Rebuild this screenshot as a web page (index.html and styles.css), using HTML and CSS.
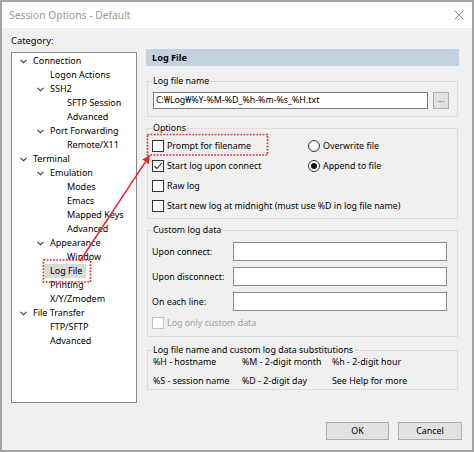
FILE: index.html
```html
<!DOCTYPE html>
<html>
<head>
<meta charset="utf-8">
<title>Session Options - Default</title>
<link rel="stylesheet" href="styles.css">
</head>
<body>
<div class="window">
  <div class="titlebar">
    <span class="title">Session Options - Default</span>
    <svg class="close" width="10" height="10" viewBox="0 0 10 10"><path d="M0.5 0.5 L9.5 9.5 M9.5 0.5 L0.5 9.5" stroke="#8a8a8a" stroke-width="1" fill="none"/></svg>
  </div>
  <div class="content">
    <div class="main">
      <div class="left">
        <div class="category">Category:</div>
        <div class="tree">
          <div class="row l0"><span class="chev"><svg width="7" height="5" viewBox="0 0 7 5"><path d="M0.5 0.8 L3.5 3.8 L6.5 0.8" fill="none" stroke="#333" stroke-width="1.1"/></svg></span>Connection</div>
          <div class="row l1"><span class="chev"></span>Logon Actions</div>
          <div class="row l1"><span class="chev"><svg width="7" height="5" viewBox="0 0 7 5"><path d="M0.5 0.8 L3.5 3.8 L6.5 0.8" fill="none" stroke="#333" stroke-width="1.1"/></svg></span>SSH2</div>
          <div class="row l2"><span class="chev"></span>SFTP Session</div>
          <div class="row l2"><span class="chev"></span>Advanced</div>
          <div class="row l1"><span class="chev"><svg width="7" height="5" viewBox="0 0 7 5"><path d="M0.5 0.8 L3.5 3.8 L6.5 0.8" fill="none" stroke="#333" stroke-width="1.1"/></svg></span>Port Forwarding</div>
          <div class="row l2"><span class="chev"></span>Remote/X11</div>
          <div class="row l0"><span class="chev"><svg width="7" height="5" viewBox="0 0 7 5"><path d="M0.5 0.8 L3.5 3.8 L6.5 0.8" fill="none" stroke="#333" stroke-width="1.1"/></svg></span>Terminal</div>
          <div class="row l1"><span class="chev"><svg width="7" height="5" viewBox="0 0 7 5"><path d="M0.5 0.8 L3.5 3.8 L6.5 0.8" fill="none" stroke="#333" stroke-width="1.1"/></svg></span>Emulation</div>
          <div class="row l2"><span class="chev"></span>Modes</div>
          <div class="row l2"><span class="chev"></span>Emacs</div>
          <div class="row l2"><span class="chev"></span>Mapped Keys</div>
          <div class="row l2"><span class="chev"></span>Advanced</div>
          <div class="row l1"><span class="chev"><svg width="7" height="5" viewBox="0 0 7 5"><path d="M0.5 0.8 L3.5 3.8 L6.5 0.8" fill="none" stroke="#333" stroke-width="1.1"/></svg></span>Appearance</div>
          <div class="row l2"><span class="chev"></span>Window</div>
          <div class="row l1"><span class="chev"></span><span class="selected">Log File</span></div>
          <div class="row l1"><span class="chev"></span>Printing</div>
          <div class="row l1"><span class="chev"></span>X/Y/Zmodem</div>
          <div class="row l0"><span class="chev"><svg width="7" height="5" viewBox="0 0 7 5"><path d="M0.5 0.8 L3.5 3.8 L6.5 0.8" fill="none" stroke="#333" stroke-width="1.1"/></svg></span>File Transfer</div>
          <div class="row l1"><span class="chev"></span>FTP/SFTP</div>
          <div class="row l1"><span class="chev"></span>Advanced</div>
        </div>
      </div>
      <div class="panel">
        <div class="header">Log File</div>

        <fieldset class="group g-name">
          <legend>Log file name</legend>
          <div class="fname">
            <div class="input wide">C:₩Log₩%Y-%M-%D_%h-%m-%s_%H.txt</div>
            <div class="dots">...</div>
          </div>
        </fieldset>

        <fieldset class="group g-opts">
          <legend>Options</legend>
          <div class="opts">
            <div class="opt"><span class="cb"></span>Prompt for filename</div>
            <div class="opt"><span class="rb"></span>Overwrite file</div>
            <div class="opt"><span class="cb"><svg width="10" height="10" viewBox="0 0 10 10"><path d="M1.5 5 L4 7.5 L8.8 2" fill="none" stroke="#222" stroke-width="1.1"/></svg></span>Start log upon connect</div>
            <div class="opt"><span class="rb on"><span class="dot"></span></span>Append to file</div>
            <div class="opt span"><span class="cb"></span>Raw log</div>
            <div class="opt span"><span class="cb"></span>Start new log at midnight (must use %D in log file name)</div>
          </div>
        </fieldset>

        <fieldset class="group g-custom">
          <legend>Custom log data</legend>
          <div class="custom">
            <div class="clabel">Upon connect:</div><div class="input field"></div>
            <div class="clabel">Upon disconnect:</div><div class="input field"></div>
            <div class="clabel">On each line:</div><div class="input field"></div>
          </div>
          <div class="opt disabled"><span class="cb"></span>Log only custom data</div>
        </fieldset>

        <fieldset class="group g-subst">
          <legend>Log file name and custom log data substitutions</legend>
          <div class="subst">
            <span>%H - hostname</span><span>%M - 2-digit month</span><span>%h - 2-digit hour</span>
            <span>%S - session name</span><span>%D - 2-digit day</span><span>See Help for more</span>
          </div>
        </fieldset>
      </div>
    </div>
    <div class="buttons">
      <div class="btn ok">OK</div>
      <div class="btn cancel">Cancel</div>
    </div>
  </div>
  <svg class="overlay" width="474" height="452" viewBox="0 0 474 452">
    <rect x="43.5" y="260" width="47" height="22" fill="none" stroke="#e3262c" stroke-width="1.7" stroke-dasharray="1.7 1.5"/>
    <rect x="147.5" y="134.5" width="120" height="20.5" fill="none" stroke="#e3262c" stroke-width="1.7" stroke-dasharray="1.7 1.5"/>
    <line x1="80" y1="261" x2="145.6" y2="161.7" stroke="#e3262c" stroke-width="1.5"/>
    <polygon points="150,155 148.8,164 142.4,159.6" fill="#e3262c"/>
  </svg>
</div>
</body>
</html>
```
FILE: styles.css
```css
* { box-sizing: border-box; }
html, body { margin: 0; padding: 0; }
body {
  width: 474px;
  height: 452px;
  overflow: hidden;
  font-family: "Noto Sans", "Segoe UI", sans-serif;
  font-size: 8.85px;
  color: #000;
}
.window {
  position: relative;
  width: 474px;
  height: 452px;
  border: 2px solid #a4a4a4;
  background: #f0f0f0;
  display: flex;
  flex-direction: column;
}
.titlebar {
  flex: none;
  height: 26px;
  background: #fff;
  display: flex;
  align-items: center;
  justify-content: space-between;
  padding: 0 8px 0 7px;
}
.title { color: #9a9a9a; font-size: 10.3px; }
.close { display: block; }
.content { flex: 1; padding: 7px 0 0 9px; }
.main {
  display: grid;
  grid-template-columns: 126px 313px;
  column-gap: 9px;
}
.category { height: 12px; line-height: 12px; margin-bottom: 5px; font-size: 9.4px; }
.tree {
  height: 351px;
  background: #fff;
  border: 1px solid #828790;
  padding-top: 1px;
  font-size: 9px;
}
.row {
  height: 14px;
  line-height: 14px;
  display: flex;
  align-items: center;
  white-space: nowrap;
}
.row.l0 { padding-left: 8px; }
.row.l1 { padding-left: 25px; }
.row.l2 { padding-left: 42px; }
.chev { width: 13px; flex: none; display: flex; align-items: center; }
.chev svg { display: block; }
.selected {
  background: #d9d9d9;
  padding: 0 4px 0 5px;
  margin-left: -5px;
  line-height: 14px;
}
.panel { padding-top: 14px; }
.header {
  height: 17px;
  line-height: 17px;
  background: #c4d2e0;
  padding-left: 6px;
  font-weight: bold;
  font-size: 9.2px;
}
.group {
  margin: 0 1px;
  border: 1px solid #dcdcdc;
  min-width: 0;
}
.group legend { padding: 0 1px; line-height: 12px; }
.g-name { margin-top: 9px; padding: 5px 4px 7px 5px; }
.g-name legend { margin-left: -1px; }
.fname { display: flex; gap: 5px; }
.input { background: #fff; border: 1px solid #7a7a7a; }
.input.wide {
  width: 275px;
  height: 17px;
  line-height: 15px;
  padding-left: 2px;
  white-space: nowrap;
  overflow: hidden;
}
.dots {
  width: 16px;
  height: 17px;
  background: #e1e1e1;
  border: 1px solid #adadad;
  color: #555;
  text-align: center;
  line-height: 13px;
}
.g-opts { margin-top: 5px; padding: 2px 4px 2px 4px; }
.opts {
  display: grid;
  grid-template-columns: 156px auto;
  grid-auto-rows: 20px;
}
.opt { display: flex; align-items: center; white-space: nowrap; }
.opt.span { grid-column: 1 / -1; }
.cb {
  width: 12px;
  height: 12px;
  border: 1px solid #333;
  background: #fff;
  margin-right: 3px;
  flex: none;
  display: flex;
  align-items: center;
  justify-content: center;
}
.cb svg { display: block; }
.rb {
  width: 12px;
  height: 12px;
  border: 1px solid #333;
  border-radius: 50%;
  background: #fff;
  margin-right: 3px;
  flex: none;
  display: flex;
  align-items: center;
  justify-content: center;
}
.rb .dot { width: 6px; height: 6px; border-radius: 50%; background: #111; }
.g-custom { margin-top: 5px; padding: 6px 4px 6px 4px; }
.custom {
  display: grid;
  grid-template-columns: 81px 214px;
  grid-auto-rows: 19px;
  row-gap: 6px;
}
.clabel { display: flex; align-items: center; }
.input.field { height: 19px; border-color: #8c8c8c; }
.opt.disabled { margin-top: 5px; height: 14px; color: #a0a0a0; }
.opt.disabled .cb { border-color: #c4c4c4; }
.g-subst { margin-top: 7px; padding: 0 4px 2px 5px; }
.g-subst legend { margin-left: -1px; }
.subst {
  display: grid;
  grid-template-columns: 89px 90px auto;
  grid-auto-rows: 12px;
  row-gap: 7px;
  line-height: 12px;
  white-space: nowrap;
}
.buttons {
  margin-top: 19px;
  display: flex;
  justify-content: flex-end;
  gap: 9px;
  padding-right: 10px;
}
.btn {
  height: 18px;
  line-height: 16px;
  background: #e1e1e1;
  border: 1px solid #adadad;
  text-align: center;
}
.btn.ok { width: 63px; }
.btn.cancel { width: 64px; }
.overlay { position: absolute; left: -2px; top: -2px; pointer-events: none; }
```
